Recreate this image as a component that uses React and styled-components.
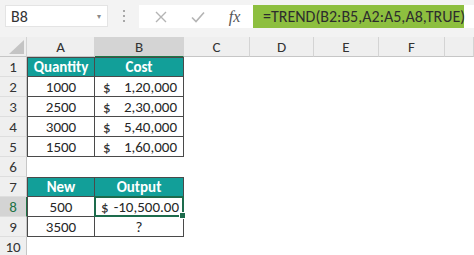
import React from 'react'
import styled, { createGlobalStyle } from 'styled-components'

const GlobalStyle = createGlobalStyle`
  body {
    margin: 0;
    background: #ffffff;
    font-family: Carlito, Lato, "Liberation Sans", sans-serif;
    color: #262626;
  }
`

const columns = ['A', 'B', 'C', 'D', 'E', 'F', '']

const rows = [
  { n: 1, a: 'Quantity', b: 'Cost', kind: 'head' },
  { n: 2, a: '1000', b: '1,20,000', kind: 'money' },
  { n: 3, a: '2500', b: '2,30,000', kind: 'money' },
  { n: 4, a: '3000', b: '5,40,000', kind: 'money' },
  { n: 5, a: '1500', b: '1,60,000', kind: 'money' },
  { n: 6, kind: 'empty' },
  { n: 7, a: 'New', b: 'Output', kind: 'head' },
  { n: 8, a: '500', b: '-10,500.00', kind: 'money', selected: true },
  { n: 9, a: '3500', b: '?', kind: 'text' },
  { n: 10, kind: 'empty' },
]

function App() {
  return (
    <Window>
      <GlobalStyle />
      <Toolbar>
        <NameBox>
          <span>B8</span>
          <Caret>▾</Caret>
        </NameBox>
        <Grip>
          <i /><i /><i />
        </Grip>
        <FormulaBar>
          <ToolIcon>
            <svg width="14" height="14" viewBox="0 0 14 14">
              <path d="M2 2 L12 12 M12 2 L2 12" stroke="#b4b4b4" strokeWidth="1.4" fill="none" />
            </svg>
          </ToolIcon>
          <ToolIcon>
            <svg width="16" height="14" viewBox="0 0 16 14">
              <path d="M2 7.5 L6 11.5 L14 2.5" stroke="#b4b4b4" strokeWidth="1.6" fill="none" />
            </svg>
          </ToolIcon>
          <ToolIcon>
            <Fx>fx</Fx>
          </ToolIcon>
          <Formula>=TREND(B2:B5,A2:A5,A8,TRUE)</Formula>
        </FormulaBar>
      </Toolbar>

      <Sheet>
        <Corner>
          <svg width="16" height="14" viewBox="0 0 16 14">
            <path d="M15 0 L15 14 L0 14 Z" fill="#c4c4c4" />
          </svg>
        </Corner>
        {columns.map((c, i) => (
          <ColHead key={i} $active={c === 'B'}>{c}</ColHead>
        ))}

        {rows.map(r => (
          <React.Fragment key={r.n}>
            <RowHead $active={r.selected}>{r.n}</RowHead>
            {r.kind === 'empty' ? (
              <>
                <Blank />
                <Blank />
              </>
            ) : (
              <>
                <Cell $head={r.kind === 'head'} $first $top={r.kind === 'head'}>{r.a}</Cell>
                {r.kind === 'money' ? (
                  <Cell $money $selected={r.selected}>
                    <span>$</span>
                    <span>{r.b}</span>
                  </Cell>
                ) : (
                  <Cell $head={r.kind === 'head'} $top={r.kind === 'head'}>{r.b}</Cell>
                )}
              </>
            )}
            <Blank />
            <Blank />
            <Blank />
            <Blank />
            <Blank />
          </React.Fragment>
        ))}
      </Sheet>
    </Window>
  )
}

export default App

const Window = styled.div`
  width: 474px;
  height: 255px;
  overflow: hidden;
  background: #ffffff;
`

const Toolbar = styled.div`
  height: 37px;
  box-sizing: border-box;
  background: #f3f3f3;
  display: flex;
  align-items: flex-start;
  padding: 5px 0 0 5px;
`

const NameBox = styled.div`
  width: 103px;
  height: 22px;
  box-sizing: border-box;
  background: #ffffff;
  border: 1px solid #e4e4e4;
  display: flex;
  align-items: center;
  justify-content: space-between;
  padding: 0 6px 0 5px;
  font-size: 16px;
  color: #333;
`

const Caret = styled.span`
  font-size: 8px;
  color: #8a8a8a;
`

const Grip = styled.div`
  width: 31px;
  height: 22px;
  display: flex;
  flex-direction: column;
  align-items: center;
  justify-content: center;
  gap: 3px;

  i {
    width: 2px;
    height: 2px;
    background: #a8a8a8;
    display: block;
  }
`

const FormulaBar = styled.div`
  flex: 1;
  height: 23px;
  background: #ffffff;
  display: flex;
  align-items: stretch;
  padding-left: 3px;
`

const ToolIcon = styled.div`
  width: 37px;
  display: flex;
  align-items: center;
  justify-content: center;
`

const Fx = styled.span`
  font-family: "Liberation Serif", serif;
  font-style: italic;
  font-size: 16px;
  color: #555;
`

const Formula = styled.div`
  width: 211px;
  background: #8dbf3f;
  display: flex;
  align-items: center;
  padding-left: 10px;
  box-sizing: border-box;
  font-size: 16px;
  color: #2d2d2d;
  white-space: nowrap;
`

const Sheet = styled.div`
  display: grid;
  grid-template-columns: 27px 68px 89px 66px 64px 65px 66px 1fr;
  grid-auto-rows: 20px;
  font-size: 15px;
`

const Corner = styled.div`
  background: #efefef;
  border-right: 1px solid #d4d4d4;
  border-bottom: 1px solid #c6c6c6;
  display: flex;
  align-items: flex-end;
  justify-content: flex-end;
  padding: 0 1px 2px 0;
  box-sizing: border-box;
`

const ColHead = styled.div`
  background: ${p => (p.$active ? '#d4d4d4' : '#efefef')};
  border-right: 1px solid #d4d4d4;
  border-bottom: 1px solid ${p => (p.$active ? '#217346' : '#c6c6c6')};
  box-sizing: border-box;
  display: flex;
  align-items: center;
  justify-content: center;
  color: #333;
`

const RowHead = styled.div`
  background: ${p => (p.$active ? '#d4d4d4' : '#efefef')};
  border-right: 1px solid ${p => (p.$active ? '#217346' : '#c6c6c6')};
  border-bottom: 1px solid #dedede;
  box-sizing: border-box;
  display: flex;
  align-items: center;
  justify-content: center;
  color: ${p => (p.$active ? '#217346' : '#333')};
`

const Cell = styled.div`
  position: relative;
  box-sizing: border-box;
  background: ${p => (p.$head ? '#129f99' : '#ffffff')};
  color: ${p => (p.$head ? '#ffffff' : '#262626')};
  font-weight: ${p => (p.$head ? 700 : 400)};
  border-right: 1px solid #4a4a4a;
  border-bottom: 1px solid #4a4a4a;
  border-left: ${p => (p.$first ? '1px solid #4a4a4a' : 'none')};
  border-top: ${p => (p.$top ? '1px solid #4a4a4a' : 'none')};
  display: flex;
  align-items: center;
  justify-content: ${p => (p.$money ? 'space-between' : 'center')};
  gap: 4px;
  padding: ${p => (p.$selected ? '0 4px 0 6px' : p.$money ? '0 6px 0 8px' : '0')};
  white-space: nowrap;

  ${p => p.$selected && `
    &::after {
      content: '';
      position: absolute;
      left: -1px;
      top: -1px;
      right: -1px;
      bottom: -1px;
      border: 2px solid #1d6b4c;
    }
    &::before {
      content: '';
      position: absolute;
      right: -3px;
      bottom: -3px;
      width: 5px;
      height: 5px;
      background: #1d6b4c;
      border: 1px solid #fff;
      z-index: 1;
    }
  `}
`

const Blank = styled.div`
  background: #ffffff;
`
